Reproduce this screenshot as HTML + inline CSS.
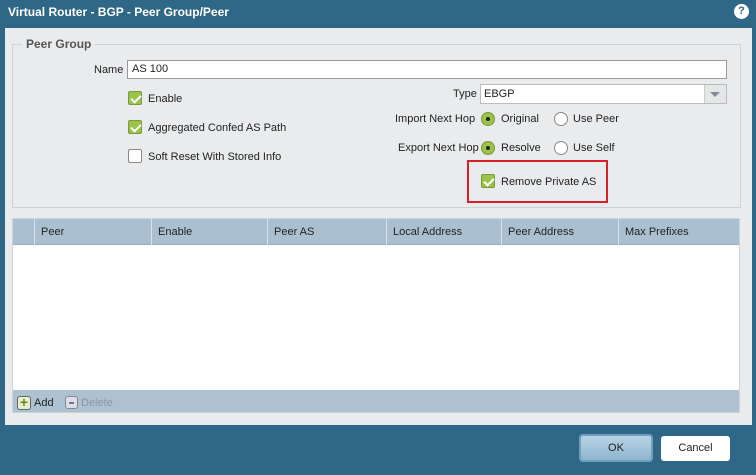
<!DOCTYPE html><html><head><style>
*{box-sizing:border-box;margin:0;padding:0}
body{width:756px;height:475px;background:#2f6886;font-family:"Liberation Sans",sans-serif;font-size:11px;color:#222;position:relative;overflow:hidden}
.a{position:absolute}
.cb{position:absolute;width:14px;height:14px;border:1px solid #8a8a8a;background:#fff;border-radius:2px}
.cb.on{background:#9bc24a;border-color:#7a9a3a}
.cb.on:after{content:"";position:absolute;left:4px;top:1px;width:4px;height:8px;border:solid #fff;border-width:0 2px 2px 0;transform:rotate(45deg)}
.rd{position:absolute;width:14px;height:14px;border-radius:50%;border:1px solid #888;background:#fff}
.rd.on{background:#9bc24a;border-color:#7a9a3a}
.rd.on:after{content:"";position:absolute;left:4px;top:4px;width:4px;height:4px;border-radius:50%;background:#222}
.th{position:absolute;top:0;height:26px;line-height:26px;padding-left:6px;border-left:1px solid #d8e2ea}
</style></head><body>
<div class="a" style="left:8px;top:5px;color:#fff;font-weight:bold;font-size:12px">Virtual Router - BGP - Peer Group/Peer</div>
<div class="a" style="left:734px;top:4px;width:15px;height:15px;border-radius:50%;background:#fff;color:#2f6886;font-weight:bold;font-size:11px;text-align:center;line-height:15px">?</div>
<div class="a" style="left:5px;top:28px;width:747px;height:397px;background:#e9ebed"></div>
<div class="a" style="left:12px;top:44px;width:729px;height:164px;border:1px solid #cfd2d5"></div>
<div class="a" style="left:22px;top:37px;background:#e9ebed;padding:0 4px;color:#555;font-weight:bold;font-size:12px">Peer Group</div>
<div class="a" style="left:94px;top:64px">Name</div>
<div class="a" style="left:127px;top:60px;width:600px;height:19px;border:1px solid #999;background:#fff;padding-left:4px;line-height:17px">AS 100</div>
<div class="cb on" style="left:128px;top:91px"></div><div class="a" style="left:148px;top:93px">Enable</div>
<div class="cb on" style="left:128px;top:120px"></div><div class="a" style="left:148px;top:122px">Aggregated Confed AS Path</div>
<div class="cb" style="left:128px;top:149px"></div><div class="a" style="left:148px;top:151px">Soft Reset With Stored Info</div>
<div class="a" style="left:453px;top:88px">Type</div>
<div class="a" style="left:480px;top:84px;width:247px;height:20px;border:1px solid #bbb;background:#fff;padding-left:3px;line-height:18px">EBGP</div>
<div class="a" style="left:704px;top:85px;width:22px;height:18px;background:#e4e6e8;border-left:1px solid #ccc"></div>
<div class="a" style="left:710px;top:92px;border:5px solid transparent;border-top:5px solid #889;border-bottom:0"></div>
<div class="a" style="left:395px;top:113px">Import Next Hop</div>
<div class="rd on" style="left:481px;top:112px"></div><div class="a" style="left:501px;top:113px">Original</div>
<div class="rd" style="left:554px;top:112px"></div><div class="a" style="left:573px;top:113px">Use Peer</div>
<div class="a" style="left:398px;top:142px">Export Next Hop</div>
<div class="rd on" style="left:481px;top:141px"></div><div class="a" style="left:501px;top:142px">Resolve</div>
<div class="rd" style="left:554px;top:141px"></div><div class="a" style="left:573px;top:142px">Use Self</div>
<div class="a" style="left:467px;top:160px;width:141px;height:43px;border:2px solid #d6202a"></div>
<div class="cb on" style="left:481px;top:174px"></div><div class="a" style="left:501px;top:176px">Remove Private AS</div>
<div class="a" style="left:12px;top:218px;width:728px;height:195px;background:#fff;border:1px solid #c9d3db">
<div class="a" style="left:0;top:0;width:726px;height:26px;background:#aac0d0;border-bottom:1px solid #9ab">
<div class="th" style="left:0;width:21px;border-left:0"></div>
<div class="th" style="left:21px;width:117px">Peer</div>
<div class="th" style="left:138px;width:116px">Enable</div>
<div class="th" style="left:254px;width:119px">Peer AS</div>
<div class="th" style="left:373px;width:115px">Local Address</div>
<div class="th" style="left:488px;width:117px">Peer Address</div>
<div class="th" style="left:605px;width:118px">Max Prefixes</div>
</div>
<div class="a" style="left:0;top:171px;width:726px;height:22px;background:#adc1d0"></div>
</div>
<div class="a" style="left:17px;top:396px;width:14px;height:14px;border:1px solid #666;border-radius:3px;background:#e8eed0;color:#6a8a1a;font-weight:bold;font-size:14px;line-height:11px;text-align:center">+</div>
<div class="a" style="left:34px;top:397px;color:#222">Add</div>
<div class="a" style="left:65px;top:396px;width:13px;height:13px;border:1px solid #888;border-radius:3px;background:#dde"><div class="a" style="left:3px;top:5px;width:5px;height:1.5px;background:#777"></div></div>
<div class="a" style="left:81px;top:397px;color:#8a96a0">Delete</div>
<div class="a" style="left:579px;top:434px;width:74px;height:28px;border-radius:4px;background:linear-gradient(#b8d3e4,#8db5cf);border:2px solid #6fa0c0;text-align:center;line-height:24px">OK</div>
<div class="a" style="left:661px;top:436px;width:69px;height:25px;border-radius:3px;background:#fff;text-align:center;line-height:25px">Cancel</div>
</body></html>
